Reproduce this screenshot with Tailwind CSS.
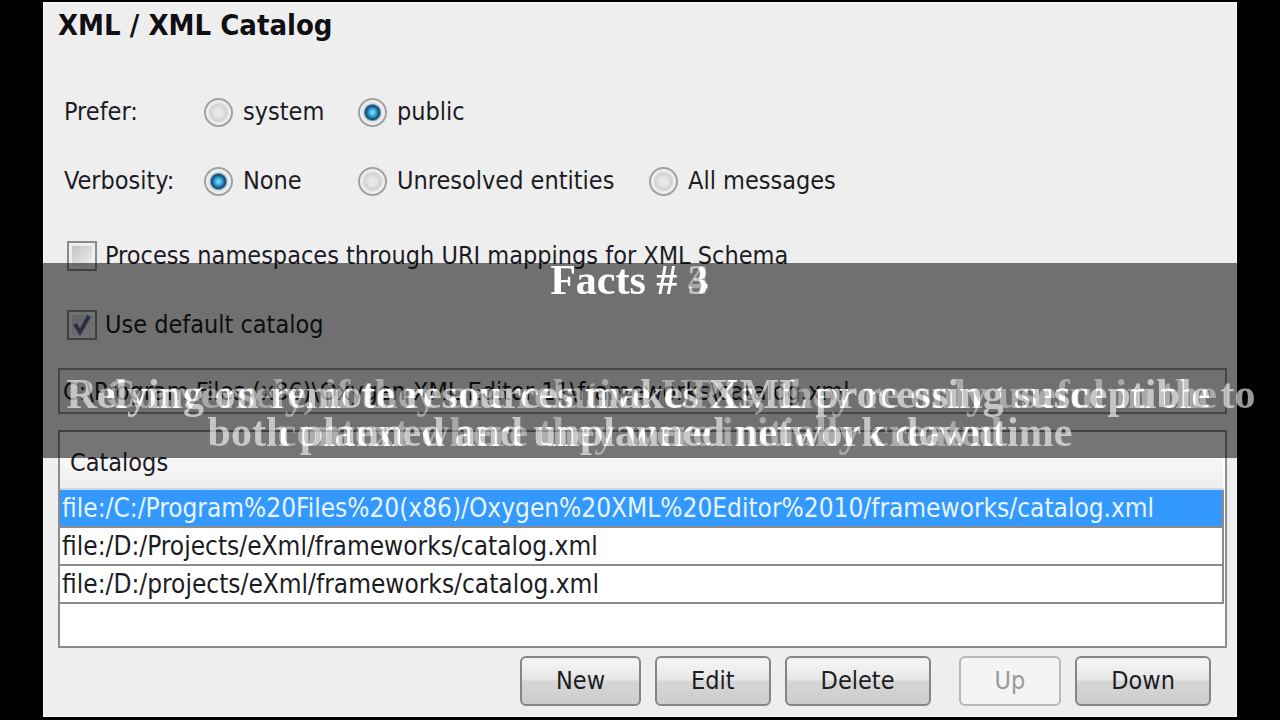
<!DOCTYPE html>
<html lang="en">
<head>
    <meta charset="UTF-8">
    <meta name="viewport" content="width=device-width, initial-scale=1.0">
    <title>XML Catalog</title>
    <script src="https://cdn.jsdelivr.net/npm/@tailwindcss/browser@4"></script>
</head>
<body class="relative min-h-screen bg-black px-[43px] pt-[2px] pb-[3px] overflow-x-hidden font-['DejaVu_Sans_Condensed','DejaVu_Sans',sans-serif] text-[25px] leading-[30px] text-[#1c1c24]">

  <!-- Preferences page -->
  <main class="bg-[#eeeeee] border border-[#f8f8f8] pl-[14px] pr-[9px] pt-[5px] pb-[10px]">
    <h1 class="text-[29px] leading-[34px] font-bold text-[#101014]">XML / XML Catalog</h1>

    <form>
      <!-- Prefer -->
      <div role="radiogroup" aria-label="Prefer" class="mt-[55px] pl-[6px] grid grid-cols-[140px_154px_291px_1fr] items-center whitespace-nowrap">
        <span>Prefer:</span>
        <label class="flex items-center gap-[10px]">
          <input type="radio" name="prefer" class="appearance-none size-[29px] rounded-full border-2 border-[#a2a2a2] bg-[radial-gradient(circle,#e6e6e6_0_4px,#d2d2d2_8px,#f0f0f0_11px)]">
          system
        </label>
        <label class="flex items-center gap-[10px]">
          <input type="radio" name="prefer" checked class="appearance-none size-[29px] rounded-full border-2 border-[#a2a2a2] bg-[radial-gradient(circle,#7cd4f4_0_1px,#2c9bd0_4px,#12466e_7px,#d4dde2_9px,#f0f0f0_11px)]">
          public
        </label>
      </div>

      <!-- Verbosity -->
      <div role="radiogroup" aria-label="Verbosity" class="mt-[39px] pl-[6px] grid grid-cols-[140px_154px_291px_1fr] items-center whitespace-nowrap">
        <span>Verbosity:</span>
        <label class="flex items-center gap-[10px]">
          <input type="radio" name="verbosity" checked class="appearance-none size-[29px] rounded-full border-2 border-[#a2a2a2] bg-[radial-gradient(circle,#7cd4f4_0_1px,#2c9bd0_4px,#12466e_7px,#d4dde2_9px,#f0f0f0_11px)]">
          None
        </label>
        <label class="flex items-center gap-[10px]">
          <input type="radio" name="verbosity" class="appearance-none size-[29px] rounded-full border-2 border-[#a2a2a2] bg-[radial-gradient(circle,#e6e6e6_0_4px,#d2d2d2_8px,#f0f0f0_11px)]">
          Unresolved entities
        </label>
        <label class="flex items-center gap-[10px]">
          <input type="radio" name="verbosity" class="appearance-none size-[29px] rounded-full border-2 border-[#a2a2a2] bg-[radial-gradient(circle,#e6e6e6_0_4px,#d2d2d2_8px,#f0f0f0_11px)]">
          All messages
        </label>
      </div>

      <!-- Options -->
      <label class="mt-[45px] ml-[9px] flex items-center gap-2 whitespace-nowrap">
        <input type="checkbox" class="appearance-none size-[30px] p-[3px] border-2 border-[#8a8a8a] bg-[linear-gradient(135deg,#b8bcc0,#f6f6f6)] bg-clip-content">
        Process namespaces through URI mappings for XML Schema
      </label>
      <label class="mt-[39px] ml-[9px] flex items-center gap-2 whitespace-nowrap">
        <span class="grid">
          <input type="checkbox" checked class="col-start-1 row-start-1 appearance-none size-[30px] p-[3px] border-2 border-[#8a8a8a] bg-[linear-gradient(135deg,#c4c8cc,#f6f6f6)] bg-clip-content">
          <svg class="col-start-1 row-start-1 size-[30px] pointer-events-none" viewBox="0 0 30 30" fill="none" stroke="#5a6494" stroke-width="4"><path d="M8 14l5 8L22 6"/></svg>
        </span>
        Use default catalog
      </label>
      <input type="text" readonly aria-label="Default catalog" value="C:\Program Files (x86)\Oxygen XML Editor 11\frameworks\catalog.xml" class="mt-[28px] block w-full h-[46px] px-[3px] border-2 border-[#929292]">

      <!-- Catalogs -->
      <div class="mt-[16px] border-2 border-[#8c8c8c] bg-white pr-px pb-[42px]">
        <table class="w-full border-collapse text-left">
          <thead>
            <tr>
              <th class="h-[57px] pl-[10px] pt-[5px] font-normal border-b-2 border-[#cfd9de] bg-linear-to-b from-white to-[#eeeeef]">Catalogs</th>
            </tr>
          </thead>
          <tbody class="border-r-2 border-[#8c8c8c] text-[26px]">
            <tr class="bg-[#3399ff] text-[#e8f5ff]"><td class="h-[38px] pl-[2px] border-b-2 border-[#8c8c8c]">file:/C:/Program%20Files%20(x86)/Oxygen%20XML%20Editor%2010/frameworks/catalog.xml</td></tr>
            <tr><td class="h-[38px] pl-[2px] border-b-2 border-[#8c8c8c]">file:/D:/Projects/eXml/frameworks/catalog.xml</td></tr>
            <tr><td class="h-[38px] pl-[2px] border-b-2 border-[#8c8c8c]">file:/D:/projects/eXml/frameworks/catalog.xml</td></tr>
          </tbody>
        </table>
      </div>

      <div class="mt-[8px] pr-[16px] flex justify-end gap-[14px]">
        <button type="button" class="h-[50px] px-[34px] rounded-md border-2 border-[#858585] bg-[linear-gradient(#f3f3f3_0_10%,#e6e6e6_48%,#d6d6d6_50%,#cdcdcd)]">New</button>
        <button type="button" class="h-[50px] px-[34px] rounded-md border-2 border-[#858585] bg-[linear-gradient(#f3f3f3_0_10%,#e6e6e6_48%,#d6d6d6_50%,#cdcdcd)]">Edit</button>
        <button type="button" class="h-[50px] px-[34px] rounded-md border-2 border-[#858585] bg-[linear-gradient(#f3f3f3_0_10%,#e6e6e6_48%,#d6d6d6_50%,#cdcdcd)]">Delete</button>
        <button type="button" disabled class="ml-[14px] h-[50px] px-[34px] rounded-md border-2 border-[#b8b8b8] bg-[#f4f4f4] text-[#9a9a9a]">Up</button>
        <button type="button" class="h-[50px] px-[34px] rounded-md border-2 border-[#858585] bg-[linear-gradient(#f3f3f3_0_10%,#e6e6e6_48%,#d6d6d6_50%,#cdcdcd)]">Down</button>
      </div>
    </form>
  </main>

  <!-- Caption band, two slides cross-fading -->
  <div class="absolute inset-x-0 top-[263px] h-[195px] bg-black/53"></div>
  <section class="absolute inset-x-0 top-[261px] isolate grid text-center font-['Liberation_Serif',serif] font-bold text-[42px] leading-[38px] whitespace-nowrap text-white">
    <div class="col-start-1 row-start-1 opacity-60 mix-blend-plus-lighter">
      <h2 class="pr-[21px]">Facts # 3</h2>
      <p class="mt-[76px] pl-[42px]">Relying on remote resources makes XML processing susceptible to</p>
      <p>both planned and unplanned network downtime</p>
    </div>
    <div class="col-start-1 row-start-1 opacity-40 mix-blend-plus-lighter">
      <h2 class="pr-[21px]">Facts # 4</h2>
      <p class="mt-[76px] pl-[42px]">Conversely, if they are relative URIs, they re only useful in the</p>
      <p>context where they were initially created</p>
    </div>
  </section>
</body>
</html>
